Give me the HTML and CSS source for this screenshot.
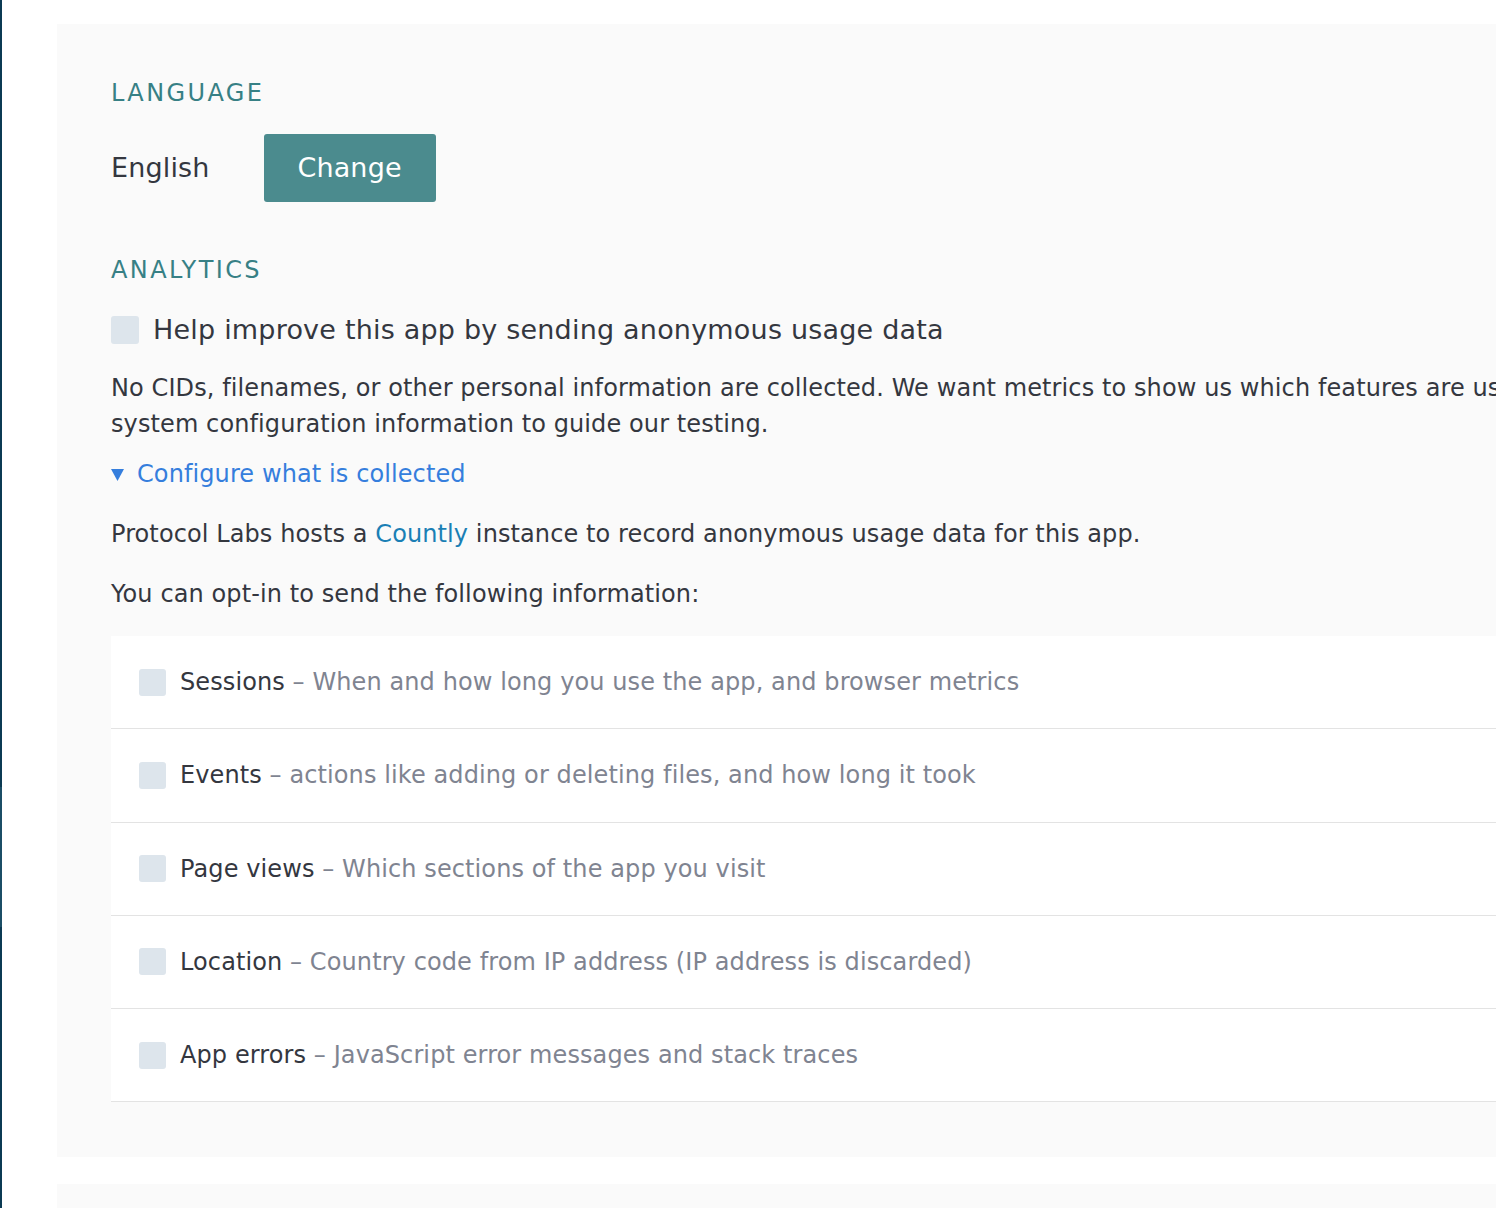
FILE: index.html
```html
<!DOCTYPE html>
<html lang="en">
<head>
<meta charset="utf-8">
<title>Settings</title>
<link rel="stylesheet" href="styles.css">
</head>
<body>
<div class="app">
  <nav class="sidebar">
    <div class="nav-top"></div>
    <div class="nav-active"></div>
    <div class="nav-rest"></div>
  </nav>
  <main class="main">
    <section class="card">
      <h2 class="section-title">Language</h2>
      <div class="lang-row">
        <span class="lang-name">English</span>
        <button class="btn">Change</button>
      </div>

      <h2 class="section-title analytics-title">Analytics</h2>
      <label class="opt-in">
        <span class="checkbox"></span>
        <span class="opt-in-text">Help improve this app by sending anonymous usage data</span>
      </label>
      <p class="copy intro">No CIDs, filenames, or other personal information are collected. We want metrics to show us which features are useful to help us prioritise what to work on, and<br>system configuration information to guide our testing.</p>

      <details class="configure" open>
        <summary class="configure-summary">
          <svg class="caret" width="13" height="12" viewBox="0 0 13 12"><path d="M0 0 H13 L6.5 12 Z" fill="#357edd"/></svg>
          <span>Configure what is collected</span>
        </summary>
        <p class="copy">Protocol Labs hosts a <a class="link" href="#">Countly</a> instance to record anonymous usage data for this app.</p>
        <p class="copy">You can opt-in to send the following information:</p>
        <ul class="metrics">
          <li class="metric"><span class="checkbox small"></span><span class="metric-name">Sessions</span><span class="metric-desc">&nbsp;– When and how long you use the app, and browser metrics</span></li>
          <li class="metric"><span class="checkbox small"></span><span class="metric-name">Events</span><span class="metric-desc">&nbsp;– actions like adding or deleting files, and how long it took</span></li>
          <li class="metric"><span class="checkbox small"></span><span class="metric-name">Page views</span><span class="metric-desc">&nbsp;– Which sections of the app you visit</span></li>
          <li class="metric"><span class="checkbox small"></span><span class="metric-name">Location</span><span class="metric-desc">&nbsp;– Country code from IP address (IP address is discarded)</span></li>
          <li class="metric"><span class="checkbox small"></span><span class="metric-name">App errors</span><span class="metric-desc">&nbsp;– JavaScript error messages and stack traces</span></li>
        </ul>
      </details>
    </section>
    <section class="card next-card"></section>
  </main>
</div>
</body>
</html>
```

FILE: styles.css
```css
html, body {
  margin: 0;
  padding: 0;
  overflow: hidden;
  background: #ffffff;
  height: 100%;
}

body {
  font-family: "DejaVu Sans", "Liberation Sans", sans-serif;
  color: #34373f;
}

.app {
  display: flex;
  min-height: 100%;
}

.sidebar {
  flex: 0 0 2px;
  display: flex;
  flex-direction: column;
  background: #0b3a53;
}

.nav-top {
  height: 787px;
  background: #0b3a53;
}

.nav-active {
  height: 140px;
  background: #1b4e66;
}

.nav-rest {
  flex: 1;
  background: #0b3a53;
}

.main {
  flex: 1;
  padding: 24px 0 0 55px;
  min-width: 0;
}

.card {
  width: 2400px;
  background: #fafafa;
  padding: 51px 0 55px 54px;
  box-sizing: border-box;
}

.next-card {
  margin-top: 27px;
  height: 200px;
}

.section-title {
  margin: 0;
  font-size: 24px;
  line-height: 36px;
  font-weight: 400;
  letter-spacing: 0.1em;
  text-transform: uppercase;
  color: #378085;
}

.analytics-title {
  margin-top: 50px;
}

.lang-row {
  display: flex;
  align-items: center;
  margin-top: 23px;
}

.lang-name {
  font-size: 27px;
  line-height: 40px;
  letter-spacing: 0.15px;
  margin-right: 54px;
}

.btn {
  font-family: inherit;
  font-size: 27px;
  line-height: 40px;
  letter-spacing: 0.15px;
  color: #ffffff;
  background: #4b8b8e;
  border: 0;
  border-radius: 3px;
  padding: 14px 33px;
  width: 172px;
  height: 68px;
}

.opt-in {
  display: flex;
  align-items: center;
  margin-top: 22px;
}

.checkbox {
  display: block;
  flex: 0 0 28px;
  width: 28px;
  height: 28px;
  border-radius: 3px;
  background: #dde5ec;
}

.checkbox.small {
  flex-basis: 27px;
  width: 27px;
  height: 27px;
}

.opt-in-text {
  margin-left: 14px;
  font-size: 27px;
  line-height: 40px;
  letter-spacing: 0.2px;
}

.copy {
  margin: 24px 0 0;
  font-size: 24px;
  line-height: 36px;
  letter-spacing: 0.1px;
}

.intro {
  margin-top: 20px;
}

.configure {
  margin-top: 14px;
}

.configure-summary {
  display: flex;
  align-items: center;
  list-style: none;
  font-size: 24px;
  line-height: 36px;
  letter-spacing: 0.1px;
  color: #357edd;
  cursor: pointer;
}

.configure-summary::-webkit-details-marker {
  display: none;
}

.caret {
  margin-right: 13px;
  margin-top: 2px;
}

.link {
  color: #1a7fb5;
  text-decoration: none;
}

.metrics {
  list-style: none;
  margin: 24px 0 0;
  padding: 0;
  background: #ffffff;
}

.metric {
  display: flex;
  align-items: center;
  padding: 28.125px 0 28.125px 28px;
  border-bottom: 1px solid #e3e3e3;
  font-size: 24px;
  line-height: 36px;
  letter-spacing: 0.1px;
}

.metric-name {
  margin-left: 14px;
  color: #34373f;
}

.metric-desc {
  color: #7f8491;
}
```
